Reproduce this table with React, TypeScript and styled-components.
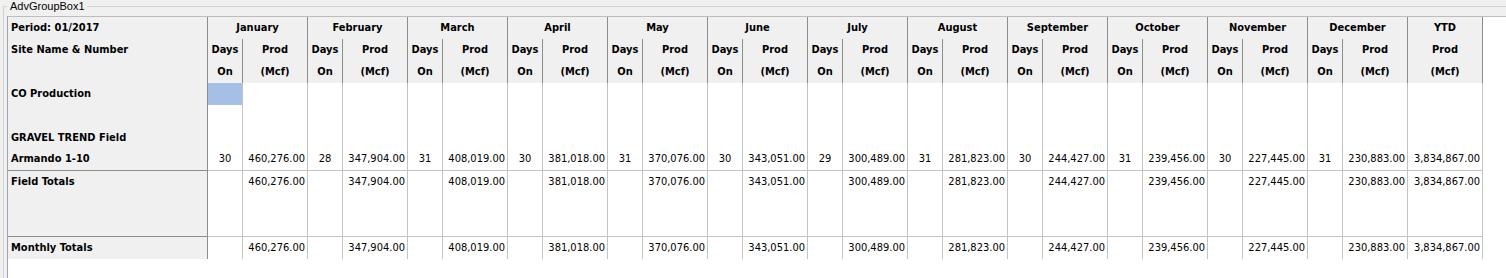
import React from "react";
import styled, { createGlobalStyle } from "styled-components";

const FONT = `"DejaVu Sans Condensed", "Liberation Sans", Arial, sans-serif`;
const headerBg = "#f0f0f0";
const darkLine = "#8c8c8c";
const lightLine = "#c3c3c3";

const GlobalStyle = createGlobalStyle`
  html, body {
    margin: 0;
    background: ${headerBg};
    overflow: hidden;
  }
  body {
    font-family: ${FONT};
    font-size: 11px;
    color: #000;
  }
`;

const GroupBox = styled.fieldset`
  margin: 0 0 0 3px;
  padding: 3px 0 0 3px;
  border: 1px solid #d3d3d3;
  width: 1540px;
  height: 290px;
  box-sizing: border-box;
  min-width: 0;
  overflow: hidden;
`;

const Legend = styled.legend`
  padding: 0 2px 0 3px;
  font-size: 11px;
  line-height: 13px;
  font-family: "Liberation Sans", Arial, sans-serif;
`;

const GridFrame = styled.div`
  background: #fff;
  border-top: 1px solid #bdbdbd;
  border-left: 1px solid #9aa4b2;
  height: 280px;
`;

const Sheet = styled.div`
  display: grid;
  grid-template-columns: 200px repeat(12, 35px 65px) 75px;
  grid-auto-rows: 22px;
  width: max-content;
`;

const BaseCell = styled.div<{ $span?: number; $rows?: number; $bottom?: boolean }>`
  box-sizing: border-box;
  display: flex;
  align-items: center;
  white-space: nowrap;
  overflow: hidden;
  padding-bottom: 2px;
  grid-column: span ${(p) => p.$span ?? 1};
  grid-row: span ${(p) => p.$rows ?? 1};
`;

const SideCell = styled(BaseCell)<{ $top?: boolean }>`
  background: ${headerBg};
  font-weight: bold;
  padding-left: 3px;
  align-items: ${(p) => (p.$top ? "flex-start" : "center")};
  padding-top: ${(p) => (p.$top ? "4px" : "0")};
  border-right: 1px solid ${darkLine};
  border-bottom: ${(p) => (p.$bottom ? `1px solid ${darkLine}` : "none")};
`;

const HeadCell = styled(BaseCell)`
  background: ${headerBg};
  font-weight: bold;
  justify-content: center;
  text-align: center;
  line-height: 22px;
  padding-bottom: 0;
  border-right: 1px solid ${darkLine};
`;

const DataCell = styled(BaseCell)<{ $align?: "right" | "center"; $selected?: boolean }>`
  background: ${(p) => (p.$selected ? "#a6bfe4" : "#fff")};
  justify-content: ${(p) => (p.$align === "center" ? "center" : "flex-end")};
  padding-right: ${(p) => (p.$align === "center" ? "0" : "2px")};
  border-right: 1px solid ${lightLine};
  border-bottom: ${(p) => (p.$bottom ? `1px solid ${lightLine}` : "none")};
`;

interface MonthData {
  name: string;
  days: number;
  prod: string;
}

const months: MonthData[] = [
  { name: "January", days: 30, prod: "460,276.00" },
  { name: "February", days: 28, prod: "347,904.00" },
  { name: "March", days: 31, prod: "408,019.00" },
  { name: "April", days: 30, prod: "381,018.00" },
  { name: "May", days: 31, prod: "370,076.00" },
  { name: "June", days: 30, prod: "343,051.00" },
  { name: "July", days: 29, prod: "300,489.00" },
  { name: "August", days: 31, prod: "281,823.00" },
  { name: "September", days: 30, prod: "244,427.00" },
  { name: "October", days: 31, prod: "239,456.00" },
  { name: "November", days: 30, prod: "227,445.00" },
  { name: "December", days: 31, prod: "230,883.00" },
];

const ytd = "3,834,867.00";

type RowKind = "blank" | "detail" | "totals";

interface RowDef {
  label: string;
  kind: RowKind;
  bottom?: boolean;
  selectFirst?: boolean;
}

const rows: RowDef[] = [
  { label: "CO Production", kind: "blank", selectFirst: true },
  { label: "", kind: "blank" },
  { label: "GRAVEL TREND Field", kind: "blank" },
  { label: "Armando 1-10", kind: "detail", bottom: true },
  { label: "Field Totals", kind: "totals" },
  { label: "", kind: "blank" },
  { label: "", kind: "blank", bottom: true },
  { label: "Monthly Totals", kind: "totals" },
];

function renderHeader() {
  const cells: React.ReactNode[] = [];
  cells.push(<SideCell key="period">Period: 01/2017</SideCell>);
  months.forEach((m) => {
    cells.push(
      <HeadCell key={"h-" + m.name} $span={2}>
        {m.name}
      </HeadCell>
    );
  });
  cells.push(<HeadCell key="h-ytd">YTD</HeadCell>);

  cells.push(
    <SideCell key="site" $rows={2} $top>
      Site Name &amp; Number
    </SideCell>
  );
  months.forEach((m) => {
    cells.push(
      <HeadCell key={"d-" + m.name} $rows={2}>
        Days
        <br />
        On
      </HeadCell>
    );
    cells.push(
      <HeadCell key={"p-" + m.name} $rows={2}>
        Prod
        <br />
        (Mcf)
      </HeadCell>
    );
  });
  cells.push(
    <HeadCell key="p-ytd" $rows={2}>
      Prod
      <br />
      (Mcf)
    </HeadCell>
  );
  return cells;
}

function renderRow(row: RowDef, index: number) {
  const cells: React.ReactNode[] = [];
  cells.push(
    <SideCell key={`s-${index}`} $bottom={row.bottom}>
      {row.label}
    </SideCell>
  );
  months.forEach((m, mi) => {
    cells.push(
      <DataCell
        key={`d-${index}-${mi}`}
        $align="center"
        $bottom={row.bottom}
        $selected={row.selectFirst && mi === 0}
      >
        {row.kind === "detail" ? m.days : ""}
      </DataCell>
    );
    cells.push(
      <DataCell key={`p-${index}-${mi}`} $bottom={row.bottom}>
        {row.kind === "blank" ? "" : m.prod}
      </DataCell>
    );
  });
  cells.push(
    <DataCell key={`y-${index}`} $bottom={row.bottom}>
      {row.kind === "blank" ? "" : ytd}
    </DataCell>
  );
  return cells;
}

export default function App() {
  return (
    <>
      <GlobalStyle />
      <GroupBox>
        <Legend>AdvGroupBox1</Legend>
        <GridFrame>
          <Sheet>
            {renderHeader()}
            {rows.map((r, i) => renderRow(r, i))}
          </Sheet>
        </GridFrame>
      </GroupBox>
    </>
  );
}
